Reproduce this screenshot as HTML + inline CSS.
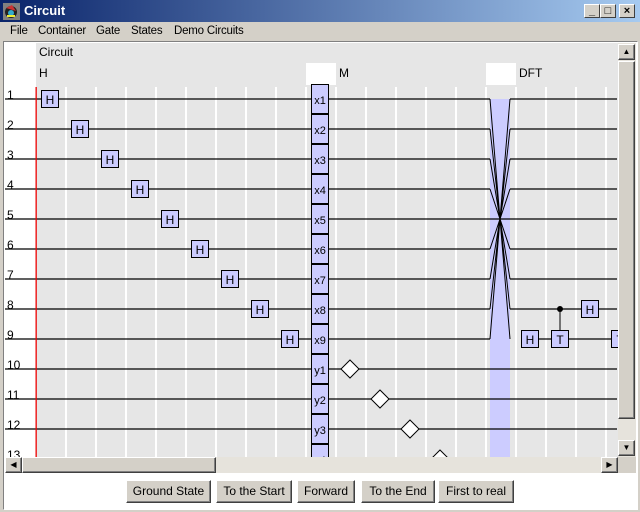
<!DOCTYPE html>
<html><head><meta charset="utf-8"><style>
*{margin:0;padding:0;box-sizing:border-box}
body{width:640px;height:512px;overflow:hidden;background:#d4d0c8;font-family:"Liberation Sans",sans-serif;font-size:12px;position:relative}
.abs{position:absolute}
#title{left:0;top:0;width:640px;height:22px;background:linear-gradient(90deg,#0a246a,#a6caf0);color:#fff;font-weight:bold;font-size:13px}
#title span{position:absolute;left:24px;top:3px}
.tb{position:absolute;top:4px;width:16px;height:14px;background:#d4d0c8;border:1px solid;border-color:#fff #404040 #404040 #fff;font-size:11px;line-height:12px;text-align:center;color:#000;font-weight:bold}
#menu span{position:absolute;top:25px;font-size:11.5px;letter-spacing:-0.2px}
.btn{position:absolute;top:480px;height:23px;background:#d4d0c8;border:1px solid;border-color:#fff #404040 #404040 #fff;box-shadow:inset -1px -1px #808080;font-size:12px;text-align:center;line-height:20px}
.sb{position:absolute;background:#d4d0c8;border:1px solid;border-color:#fff #404040 #404040 #fff;box-shadow:inset -1px -1px #808080}
</style></head><body>
<div id="title" class="abs">
<svg class="abs" style="left:3px;top:3px" width="17" height="17"><rect x="0" y="0" width="17" height="17" fill="#808080"/><circle cx="8" cy="9" r="6" fill="#222"/><path d="M3 5 L9 2 L13 8 Z" fill="#c33"/><circle cx="8" cy="10" r="3" fill="#3ac"/><path d="M4 13 L12 13" stroke="#ee3" stroke-width="2"/></svg>
<span>Circuit</span>
<div class="tb" style="left:584px">_</div><div class="tb" style="left:600px">□</div><div class="tb" style="left:619px">×</div>
</div>
<div id="menu"><span style="left:10px">File</span><span style="left:38px">Container</span><span style="left:96px">Gate</span><span style="left:131px">States</span><span style="left:174px">Demo Circuits</span></div>
<div class="abs" style="left:3px;top:41px;width:635px;height:469px;background:#fff;border:1px solid;border-color:#808080 #fff #fff #808080"></div>
<svg class="abs" style="left:5px;top:43px" width="613" height="414" viewBox="5 43 613 414" font-family="Liberation Sans,sans-serif" font-size="12">
<rect x="5" y="43" width="613" height="414" fill="#fff"/>
<rect x="36" y="43" width="582" height="414" fill="#e6e6e6"/>
<rect x="306" y="63" width="30" height="22" fill="#fff"/>
<rect x="486" y="63" width="30" height="22" fill="#fff"/>
<text x="39" y="56">Circuit</text><text x="39" y="77">H</text><text x="339" y="77">M</text><text x="519" y="77">DFT</text>
<g fill="#fff">
<rect x="65" y="87" width="2" height="370"/><rect x="95" y="87" width="2" height="370"/><rect x="125" y="87" width="2" height="370"/><rect x="155" y="87" width="2" height="370"/><rect x="185" y="87" width="2" height="370"/><rect x="215" y="87" width="2" height="370"/><rect x="245" y="87" width="2" height="370"/><rect x="275" y="87" width="2" height="370"/><rect x="305" y="87" width="2" height="370"/><rect x="335" y="87" width="2" height="370"/><rect x="365" y="87" width="2" height="370"/><rect x="395" y="87" width="2" height="370"/><rect x="425" y="87" width="2" height="370"/><rect x="455" y="87" width="2" height="370"/><rect x="485" y="87" width="2" height="370"/><rect x="515" y="87" width="2" height="370"/><rect x="545" y="87" width="2" height="370"/><rect x="575" y="87" width="2" height="370"/><rect x="605" y="87" width="2" height="370"/>
</g>
<rect x="490" y="99" width="20" height="358" fill="#ccccff"/>
<g stroke="#000" stroke-width="1.3">
<path d="M5 99H490M510 99H617M5 129H490M510 129H617M5 159H490M510 159H617M5 189H490M510 189H617M5 219H617M5 249H490M510 249H617M5 279H490M510 279H617M5 309H490M510 309H617M5 339H490M521 339H617M5 369H617M5 399H617M5 429H617"/>
<path fill="none" stroke-width="1" d="M490 99L500 219L510 99M490 129L500 219L510 129M490 159L500 219L510 159M490 189L500 219L510 189M490 249L500 219L510 249M490 279L500 219L510 279M490 309L500 219L510 309M490 339L500 219L510 339"/>
</g>
<rect x="35.5" y="87" width="1.3" height="370" fill="#e00"/>
<g font-size="12">
<text x="7" y="99">1</text><text x="7" y="129">2</text><text x="7" y="159">3</text><text x="7" y="189">4</text><text x="7" y="219">5</text><text x="7" y="249">6</text><text x="7" y="279">7</text><text x="7" y="309">8</text><text x="7" y="339">9</text><text x="7" y="369">10</text><text x="7" y="399">11</text><text x="7" y="429">12</text><text x="7" y="459">13</text>
</g>
<g fill="#ccccff" stroke="#000">
<rect x="41.5" y="90.5" width="17" height="17"/><rect x="71.5" y="120.5" width="17" height="17"/><rect x="101.5" y="150.5" width="17" height="17"/><rect x="131.5" y="180.5" width="17" height="17"/><rect x="161.5" y="210.5" width="17" height="17"/><rect x="191.5" y="240.5" width="17" height="17"/><rect x="221.5" y="270.5" width="17" height="17"/><rect x="251.5" y="300.5" width="17" height="17"/><rect x="281.5" y="330.5" width="17" height="17"/>
<rect x="521.5" y="330.5" width="17" height="17"/><rect x="551.5" y="330.5" width="17" height="17"/><rect x="581.5" y="300.5" width="17" height="17"/><rect x="611.5" y="330.5" width="17" height="17"/>
<rect x="311.5" y="84.5" width="17" height="380"/>
</g>
<g fill="#000">
<rect x="311" y="113" width="18" height="2"/><rect x="311" y="143" width="18" height="2"/><rect x="311" y="173" width="18" height="2"/><rect x="311" y="203" width="18" height="2"/><rect x="311" y="233" width="18" height="2"/><rect x="311" y="263" width="18" height="2"/><rect x="311" y="293" width="18" height="2"/><rect x="311" y="323" width="18" height="2"/><rect x="311" y="353" width="18" height="2"/><rect x="311" y="383" width="18" height="2"/><rect x="311" y="413" width="18" height="2"/><rect x="311" y="443" width="18" height="2"/>
<circle cx="560" cy="309" r="3"/><rect x="559.5" y="309" width="1" height="22"/>
</g>
<g text-anchor="middle" font-size="12">
<text x="50" y="104">H</text><text x="80" y="134">H</text><text x="110" y="164">H</text><text x="140" y="194">H</text><text x="170" y="224">H</text><text x="200" y="254">H</text><text x="230" y="284">H</text><text x="260" y="314">H</text><text x="290" y="344">H</text>
<text x="530" y="344">H</text><text x="560" y="344">T</text><text x="590" y="314">H</text><text x="620" y="344">T</text>
<text x="320" y="104" font-size="11">x1</text><text x="320" y="134" font-size="11">x2</text><text x="320" y="164" font-size="11">x3</text><text x="320" y="194" font-size="11">x4</text><text x="320" y="224" font-size="11">x5</text><text x="320" y="254" font-size="11">x6</text><text x="320" y="284" font-size="11">x7</text><text x="320" y="314" font-size="11">x8</text><text x="320" y="344" font-size="11">x9</text><text x="320" y="374" font-size="11">y1</text><text x="320" y="404" font-size="11">y2</text><text x="320" y="434" font-size="11">y3</text><text x="320" y="464" font-size="11">y4</text>
</g>
<g fill="#fff" stroke="#000">
<path d="M350 360L359 369L350 378L341 369Z"/><path d="M380 390L389 399L380 408L371 399Z"/><path d="M410 420L419 429L410 438L401 429Z"/><path d="M440 450L449 459L440 468L431 459Z"/>
</g>
</svg>
<div class="abs" style="left:618px;top:43px;width:18px;height:414px;background:#e6e3dc"></div>
<div class="sb" style="left:618px;top:44px;width:17px;height:16px;font-size:8px;text-align:center;line-height:14px">▲</div>
<div class="sb" style="left:618px;top:61px;width:17px;height:358px"></div>
<div class="sb" style="left:618px;top:440px;width:17px;height:16px;font-size:8px;text-align:center;line-height:14px">▼</div>
<div class="abs" style="left:5px;top:457px;width:613px;height:16px;background:#e6e3dc"></div>
<div class="sb" style="left:5px;top:457px;width:17px;height:16px;font-size:8px;text-align:center;line-height:14px">◀</div>
<div class="sb" style="left:22px;top:457px;width:194px;height:16px"></div>
<div class="sb" style="left:601px;top:457px;width:17px;height:16px;font-size:8px;text-align:center;line-height:14px">▶</div>
<div class="abs" style="left:618px;top:457px;width:18px;height:16px;background:#d4d0c8"></div>
<div class="abs" style="left:4px;top:473px;width:632px;height:36px;background:#fff"></div>
<div class="btn" style="left:126px;width:85px">Ground State</div>
<div class="btn" style="left:216px;width:76px">To the Start</div>
<div class="btn" style="left:297px;width:58px">Forward</div>
<div class="btn" style="left:361px;width:74px">To the End</div>
<div class="btn" style="left:438px;width:76px">First to real</div>
</body></html>
